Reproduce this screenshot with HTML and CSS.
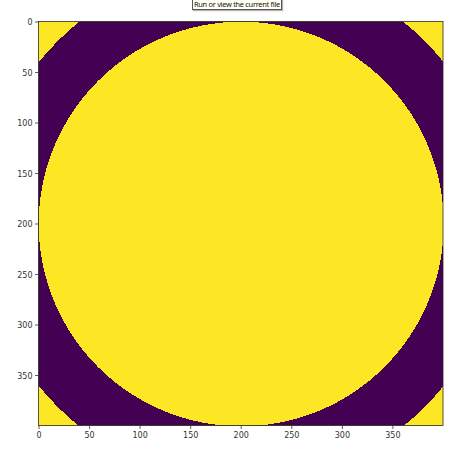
FILE: index.html
```html
<!DOCTYPE html>
<html>
<head>
<meta charset="utf-8">
<link rel="stylesheet" href="styles.css">
</head>
<body>
<div class="figure">
  <svg class="chart" width="474" height="469" viewBox="0 0 474 469" xmlns="http://www.w3.org/2000/svg">
    <defs>
      <clipPath id="axclip"><rect x="0" y="0" width="400" height="400"/></clipPath>
    </defs>
    <g transform="translate(38.5,21.5) scale(1.01125,1.01)">
      <g clip-path="url(#axclip)" shape-rendering="crispEdges">
        <rect class="yel" x="0" y="0" width="400" height="400"/>
        <circle class="pur" cx="200.5" cy="200.5" r="256.4"/>
        <circle class="yel" cx="200.5" cy="200.5" r="200.3"/>
      </g>
    </g>
    <rect class="spine" x="38.5" y="21.5" width="404.5" height="404"/>
    <g class="ticks">
      <line x1="35" y1="22" x2="38.5" y2="22"/>
      <line x1="35" y1="72.5" x2="38.5" y2="72.5"/>
      <line x1="35" y1="123" x2="38.5" y2="123"/>
      <line x1="35" y1="173.5" x2="38.5" y2="173.5"/>
      <line x1="35" y1="224" x2="38.5" y2="224"/>
      <line x1="35" y1="274.5" x2="38.5" y2="274.5"/>
      <line x1="35" y1="325" x2="38.5" y2="325"/>
      <line x1="35" y1="375.5" x2="38.5" y2="375.5"/>
      <line x1="39" y1="425.5" x2="39" y2="429"/>
      <line x1="89.6" y1="425.5" x2="89.6" y2="429"/>
      <line x1="140.1" y1="425.5" x2="140.1" y2="429"/>
      <line x1="190.7" y1="425.5" x2="190.7" y2="429"/>
      <line x1="241.2" y1="425.5" x2="241.2" y2="429"/>
      <line x1="291.8" y1="425.5" x2="291.8" y2="429"/>
      <line x1="342.4" y1="425.5" x2="342.4" y2="429"/>
      <line x1="392.9" y1="425.5" x2="392.9" y2="429"/>
    </g>
    <g class="ylab">
      <text x="32.5" y="25">0</text>
      <text x="32.5" y="75.5">50</text>
      <text x="32.5" y="126">100</text>
      <text x="32.5" y="176.5">150</text>
      <text x="32.5" y="227">200</text>
      <text x="32.5" y="277.5">250</text>
      <text x="32.5" y="328">300</text>
      <text x="32.5" y="378.5">350</text>
    </g>
    <g class="xlab">
      <text x="39" y="438">0</text>
      <text x="89.6" y="438">50</text>
      <text x="140.1" y="438">100</text>
      <text x="190.7" y="438">150</text>
      <text x="241.2" y="438">200</text>
      <text x="291.8" y="438">250</text>
      <text x="342.4" y="438">300</text>
      <text x="392.9" y="438">350</text>
    </g>
  </svg>
  <div class="tooltip">Run or view the current file</div>
</div>
</body>
</html>
```
FILE: styles.css
```css
html, body {
  margin: 0;
  padding: 0;
  background: #ffffff;
}
.figure {
  position: relative;
  width: 474px;
  height: 469px;
  overflow: hidden;
}
.chart {
  display: block;
}
.yel { fill: #fde725; }
.pur { fill: #440154; }
.spine {
  fill: none;
  stroke: #2a2a1a;
  stroke-width: 0.8;
}
.ticks line {
  stroke: #333333;
  stroke-width: 0.8;
}
.ylab text, .xlab text {
  font-family: "DejaVu Sans", sans-serif;
  font-size: 8px;
  fill: #333333;
}
.ylab text { text-anchor: end; }
.xlab text { text-anchor: middle; }
.tooltip {
  position: absolute;
  left: 192px;
  top: -2px;
  padding: 0 1px 0 1px;
  background: #fffff4;
  border: 1px solid #555555;
  box-shadow: 1px 1px 1px rgba(0,0,0,0.3);
  font-family: "Noto Sans", sans-serif;
  font-size: 7.4px;
  line-height: 10px;
  color: #111111;
  white-space: nowrap;
  letter-spacing: -0.28px;
}
```
